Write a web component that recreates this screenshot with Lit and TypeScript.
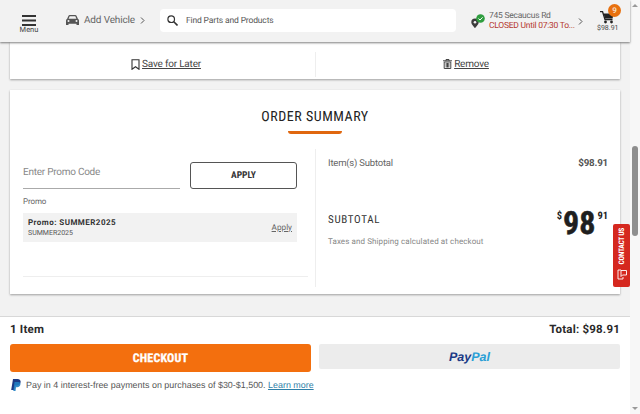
import { LitElement, css, html } from "lit";
import { customElement } from "lit/decorators.js";

@customElement("app-root")
export class AppRoot extends LitElement {
  static styles = css`
    :host {
      display: flex;
      width: 640px;
      height: 414px;
      overflow: hidden;
      position: relative;
      background: #f2f2f2;
      font-family: Roboto, "Liberation Sans", sans-serif;
      color: #333;
      text-rendering: geometricPrecision;
    }
    .page {
      width: 630px;
      display: flex;
      flex-direction: column;
    }

    /* top bar */
    .header {
      height: 42px;
      flex: none;
      display: flex;
      align-items: center;
      background: #f2f2f2;
      box-shadow: 0 1px 2px rgba(0, 0, 0, 0.5);
      position: relative;
      z-index: 2;
    }
    .menu {
      width: 58px;
      display: flex;
      flex-direction: column;
      align-items: center;
      font-size: 7.5px;
      color: #444;
      margin-top: 7px;
    }
    .menu svg { display: block; margin-bottom: -1px; }
    .vehicle {
      display: flex;
      align-items: center;
      width: 102px;
      padding-left: 8px;
      box-sizing: border-box;
      font-size: 10px;
      letter-spacing: -0.15px;
      color: #666;
      margin-top: -2px;
    }
    .vehicle span { margin: 0 5px; }
    .search {
      width: 296px;
      height: 23px;
      margin-top: -1px;
      background: #fff;
      border-radius: 4px;
      display: flex;
      align-items: center;
      padding-left: 7px;
      box-sizing: border-box;
      font-size: 8.5px;
      letter-spacing: -0.15px;
      color: #555;
      gap: 8px;
    }
    .store {
      display: flex;
      align-items: center;
      margin-left: 15px;
      width: 128px;
    }
    .store-text {
      margin-left: 4px;
      width: 89px;
      font-size: 8.5px;
      letter-spacing: -0.25px;
      line-height: 10px;
      color: #666;
      white-space: nowrap;
    }
    .closed { color: #b5382f; }
    .cart {
      position: relative;
      width: 21px;
      text-align: center;
      font-size: 7px;
      color: #444;
      margin-left: -2px;
      white-space: nowrap;
    }
    .cart svg { display: block; margin: 0 auto 0 3px; }
    .badge {
      position: absolute;
      left: 11px;
      top: -7px;
      width: 13px;
      height: 13px;
      border-radius: 50%;
      background: #e8710f;
      color: #f7dcc0;
      font-size: 8px;
      font-weight: 700;
      line-height: 13px;
    }

    /* scrolled content */
    .content {
      flex: 1;
      min-height: 0;
      padding: 0 10px;
      overflow: hidden;
    }
    .card {
      background: #fff;
      box-shadow: 0 1px 2px rgba(0, 0, 0, 0.35);
    }
    .actions {
      height: 37px;
      display: flex;
      align-items: center;
      font-size: 10px;
      letter-spacing: -0.2px;
      color: #444;
    }
    .action {
      height: 25px;
      margin-top: 7px;
      box-sizing: border-box;
      display: flex;
      align-items: center;
      justify-content: center;
      gap: 2px;
    }
    .save { width: 305px; flex: none; padding-left: 7px; }
    .remove { flex: 1; padding-right: 4px; border-left: 1px solid #eee; }
    .action u { text-underline-offset: 1px; }
    .summary {
      margin-top: 11px;
      height: 204px;
      box-sizing: border-box;
      padding-top: 19px;
    }
    .narrow {
      font-family: "Liberation Sans Narrow", "Roboto Condensed", Roboto, sans-serif;
    }
    .title {
      text-align: center;
      font-size: 14px;
      line-height: 17px;
      letter-spacing: 0.55px;
      color: #222;
    }
    .rule {
      width: 54px;
      height: 3px;
      margin: 5px auto 0;
      background: #e0670f;
      border-radius: 0 0 6px 6px;
    }
    .cols {
      display: flex;
      margin-top: 15px;
      height: 138px;
    }
    .left {
      width: 305px;
      box-sizing: border-box;
      padding: 13px 0 0 13px;
    }
    .right {
      flex: 1;
      border-left: 1px solid #eee;
      box-sizing: border-box;
      padding: 9px 12px 0 12px;
    }
    .promo-row {
      display: flex;
      width: 274px;
      gap: 10px;
    }
    .field {
      width: 157px;
      height: 27px;
      box-sizing: border-box;
      border-bottom: 1px solid #aaa;
      font-size: 10px;
      letter-spacing: -0.25px;
      color: #888;
      padding-top: 5px;
    }
    .apply-btn {
      width: 107px;
      height: 27px;
      box-sizing: border-box;
      border: 1px solid #555;
      border-radius: 3px;
      display: flex;
      align-items: center;
      justify-content: center;
      font-size: 9.5px;
      font-weight: 700;
      color: #333;
    }
    .promo-label {
      font-size: 8px;
      letter-spacing: -0.1px;
      color: #666;
      margin-top: 8px;
      line-height: 10px;
    }
    .promo-box {
      width: 274px;
      height: 29px;
      margin-top: 6px;
      box-sizing: border-box;
      background: #f2f2f2;
      padding: 0 5px;
      display: flex;
      align-items: center;
      justify-content: space-between;
    }
    .promo-name {
      font-size: 8px;
      font-weight: 700;
      letter-spacing: 0.45px;
      line-height: 10px;
      color: #333;
    }
    .promo-code {
      font-size: 7px;
      line-height: 10px;
      color: #555;
    }
    .promo-box u { font-size: 8.2px; color: #666; }
    .hr {
      height: 1px;
      background: #eee;
      margin-top: 34px;
      width: 285px;
    }
    .line {
      display: flex;
      justify-content: space-between;
      align-items: center;
      font-size: 9.5px;
      letter-spacing: -0.2px;
      line-height: 12px;
      color: #666;
    }
    .line b { font-size: 9.8px; font-weight: 700; color: #555; }
    .total {
      display: flex;
      justify-content: space-between;
      margin-top: 31px;
      height: 36px;
    }
    .total-label {
      font-size: 11px;
      letter-spacing: 0.7px;
      color: #333;
      padding-top: 12px;
    }
    .price {
      display: flex;
      font-weight: 700;
      color: #1f1f1f;
      line-height: 1;
      padding-top: 5px;
    }
    .price .big {
      font-size: 32px;
      line-height: 34px;
      margin: 0 2px 0 1px;
      font-weight: 700;
      -webkit-text-stroke: 0.5px #1f1f1f;
    }
    .price .sup { font-size: 10.5px; line-height: 12px; padding-top: 4px; }
    .note {
      font-size: 8px;
      letter-spacing: 0.1px;
      color: #888;
      line-height: 10px;
    }

    /* sticky checkout */
    .footer {
      height: 98px;
      flex: none;
      background: #fff;
      border-top: 1px solid #d8d8d8;
      box-sizing: border-box;
      padding: 5px 10px 0;
    }
    .counts {
      display: flex;
      justify-content: space-between;
      font-size: 11.5px;
      line-height: 14px;
      font-weight: 700;
      color: #2a2a2a;
      letter-spacing: 0.2px;
    }
    .buttons {
      display: flex;
      gap: 8px;
      margin-top: 8px;
      align-items: flex-start;
    }
    .checkout {
      flex: 1;
      height: 28px;
      background: #f36f0e;
      border-radius: 3px;
      color: #fff;
      font-size: 12px;
      font-weight: 700;
      letter-spacing: 0.2px;
      -webkit-text-stroke: 0.3px #fff;
      display: flex;
      align-items: center;
      justify-content: center;
    }
    .paypal {
      flex: 1;
      height: 25px;
      background: #ececec;
      border-radius: 2px;
      display: flex;
      align-items: center;
      justify-content: center;
      font-family: "Liberation Sans", sans-serif;
      font-size: 12.5px;
      font-weight: 700;
      font-style: italic;
      color: #1b3a86;
    }
    .paypal span { color: #2a9fd6; }
    .pay4 {
      display: flex;
      align-items: center;
      gap: 5px;
      margin-top: 7px;
      font-family: "Liberation Sans", sans-serif;
      font-size: 8.94px;
      color: #555;
      white-space: nowrap;
    }
    .pay4 svg { margin-left: 1px; }
    .pay4 u { color: #2f7fa8; }

    /* fake window scrollbar */
    .scrollbar {
      width: 10px;
      background: #f7f7f7;
      display: flex;
      flex-direction: column;
      align-items: center;
      justify-content: space-between;
      padding: 4px 0;
      box-sizing: border-box;
      position: relative;
    }
    .thumb {
      position: absolute;
      left: 2px;
      top: 146px;
      width: 6px;
      height: 90px;
      border-radius: 3px;
      background: #8e8e8e;
    }
    .arrow-up, .arrow-down {
      width: 0;
      height: 0;
      border-left: 3px solid transparent;
      border-right: 3px solid transparent;
    }
    .arrow-up { border-bottom: 3px solid #999; }
    .arrow-down { border-top: 3px solid #999; }

    /* floating tab */
    .contact {
      position: absolute;
      left: 613px;
      top: 224px;
      width: 17px;
      height: 63px;
      z-index: 3;
      box-sizing: border-box;
      background: #d5281f;
      border-radius: 2px;
      color: #fff;
      display: flex;
      flex-direction: column;
      align-items: center;
      gap: 5px;
      padding-top: 4px;
    }
    .contact span {
      writing-mode: vertical-rl;
      transform: rotate(180deg);
      font-size: 7.5px;
      letter-spacing: -0.3px;
      font-weight: 700;
      line-height: 12px;
      white-space: nowrap;
    }
    .contact svg { flex: none; }
  `;

  render() {
    return html`
      <div class="page">
        <div class="header">
          <div class="menu">
            <svg width="14" height="11" viewBox="0 0 14 11"><path d="M0 1h14M0 5.500h14M0 10h14" stroke="#333" stroke-width="1.800"/></svg>
            Menu
          </div>
          <div class="vehicle">
            <svg width="13" height="10" viewBox="0 0 13 10"><path d="M1 4l1.500-3.200C2.700.3 3.200 0 3.700 0h5.600c.5 0 1 .3 1.200.8L12 4c.6.300 1 .8 1 1.500V10h-2.500V8.800h-8V10H0V5.500C0 4.800.4 4.300 1 4zm1.600-.2h7.800L9.300 1.200H3.700zM2.500 5a1 1 0 100 2 1 1 0 000-2zm8 0a1 1 0 100 2 1 1 0 000-2z" fill="#555"/></svg>
            <span>Add Vehicle</span>
            <svg width="5" height="7" viewBox="0 0 5 7"><path d="M1 .5l3 3-3 3" fill="none" stroke="#555"/></svg>
          </div>
          <div class="search">
            <svg width="11" height="11" viewBox="0 0 11 11"><circle cx="4.200" cy="4.200" r="3.300" fill="none" stroke="#333" stroke-width="1.200"/><path d="M6.800 6.800L10.500 10.500" stroke="#333" stroke-width="1.600"/></svg>
            Find Parts and Products
          </div>
          <div class="store">
            <svg width="14" height="14" viewBox="0 0 14 14"><path d="M4 4.500a3.700 3.700 0 013.700 3.700C7.700 10.500 4 14 4 14S.3 10.500.3 8.200A3.700 3.700 0 014 4.500z" fill="#3c3c3c"/><circle cx="4" cy="8.200" r="1.300" fill="#f2f2f2"/><circle cx="9.500" cy="4.500" r="4.300" fill="#2f9e3f"/><path d="M7.500 4.500l1.500 1.500 2.600-2.700" fill="none" stroke="#fff" stroke-width="1"/></svg>
            <div class="store-text">
              745 Secaucus Rd<br />
              <span class="closed">CLOSED Until 07:30 To...</span>
            </div>
            <svg width="5" height="7" viewBox="0 0 5 7"><path d="M1 .5l3 3-3 3" fill="none" stroke="#555"/></svg>
          </div>
          <div class="cart">
            <svg width="14" height="13" viewBox="0 0 14 13"><path d="M0 .5h2.500L5 8.500h7.500" fill="none" stroke="#222" stroke-width="1.300"/><path d="M3.500 2.500H14l-1.500 5H5z" fill="#222"/><circle cx="5.500" cy="11" r="1.400" fill="#222"/><circle cx="11.500" cy="11" r="1.400" fill="#222"/></svg>
            $98.91
            <div class="badge">9</div>
          </div>
        </div>

        <div class="content">
          <div class="card actions">
            <div class="action save">
              <svg width="9" height="11" viewBox="0 0 9 11"><path d="M1 .7h7v9.600L4.500 7.800 1 10.300z" fill="none" stroke="#333" stroke-width="1.100"/></svg>
              <u>Save for Later</u>
            </div>
            <div class="action remove">
              <svg width="9" height="10" viewBox="0 0 9 10"><path d="M0 1.800h9M3 1.800V.5h3v1.300M1.200 3h6.600v6.500H1.200zM3.200 4v4.500M4.500 4v4.500M5.800 4v4.500" fill="none" stroke="#444"/></svg>
              <u>Remove</u>
            </div>
          </div>

          <div class="card summary">
            <div class="title narrow">ORDER SUMMARY</div>
            <div class="rule"></div>
            <div class="cols">
              <div class="left">
                <div class="promo-row">
                  <div class="field">Enter Promo Code</div>
                  <div class="apply-btn narrow">APPLY</div>
                </div>
                <div class="promo-label">Promo</div>
                <div class="promo-box">
                  <div>
                    <div class="promo-name">Promo: SUMMER2025</div>
                    <div class="promo-code">SUMMER2025</div>
                  </div>
                  <u>Apply</u>
                </div>
                <div class="hr"></div>
              </div>
              <div class="right">
                <div class="line"><span>Item(s) Subtotal</span><b>$98.91</b></div>
                <div class="total">
                  <div class="total-label narrow">SUBTOTAL</div>
                  <div class="price narrow">
                    <span class="sup">$</span><span class="big">98</span><span class="sup">91</span>
                  </div>
                </div>
                <div class="note">Taxes and Shipping calculated at checkout</div>
              </div>
            </div>
          </div>
        </div>

        <div class="footer">
          <div class="counts"><span>1 Item</span><span>Total: $98.91</span></div>
          <div class="buttons">
            <div class="checkout narrow">CHECKOUT</div>
            <div class="paypal">Pay<span>Pal</span></div>
          </div>
          <div class="pay4">
            <svg width="10" height="12" viewBox="0 0 10 12"><path d="M2 0h4.500C8.700 0 10 1.300 9.600 3.300 9.200 5.500 7.600 6.600 5.500 6.600H4L3.300 11H.2z" fill="#1b3a86"/><path d="M3.500 3h3.800c1.500 0 2.400 1 2.100 2.600-.4 1.800-1.600 2.700-3.300 2.700H5L4.500 12H2.300z" fill="#1f7fc4" opacity=".9"/></svg>
            <span>Pay in 4 interest-free payments on purchases of $30-$1,500. <u>Learn more</u></span>
          </div>
        </div>
      </div>

      <div class="scrollbar">
        <div class="arrow-up"></div>
        <div class="thumb"></div>
        <div class="arrow-down"></div>
      </div>

      <div class="contact">
        <span class="narrow">CONTACT US</span>
        <svg width="10" height="11" viewBox="0 0 10 11"><path d="M4 1H1v9h5V8M4 1.500h5.500V6H5.500L4 7.500z" fill="none" stroke="#fff" stroke-width="0.900"/></svg>
      </div>
    `;
  }
}
